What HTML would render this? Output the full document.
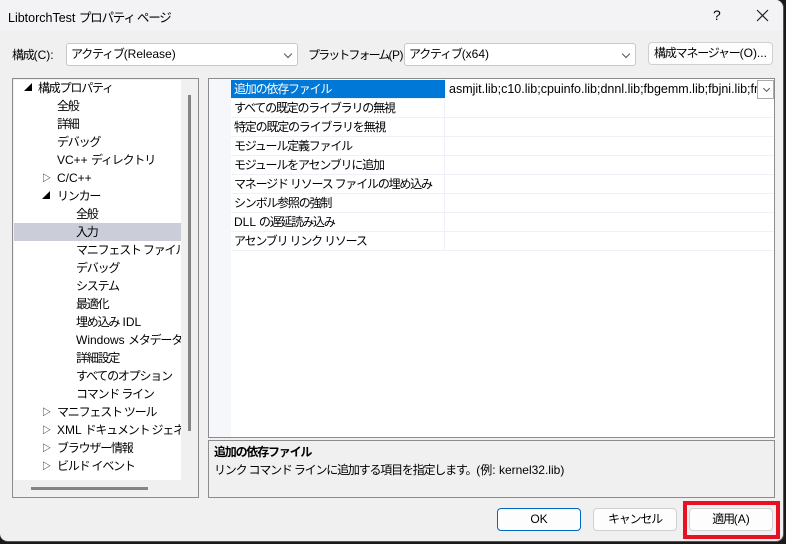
<!DOCTYPE html>
<html><head><meta charset="utf-8"><style>
*{box-sizing:border-box;margin:0;padding:0}
body{width:786px;height:544px;background:#1a1a1a;overflow:hidden;font-family:"Liberation Sans","Noto Sans CJK JP",sans-serif;font-size:12px;color:#000;letter-spacing:-1.2px}
.L{letter-spacing:0}
.win{position:absolute;left:0;top:0;width:784px;height:542px;background:#f0f0f0;border-radius:0 8px 8px 8px;overflow:hidden;border-right:1px solid #555;border-bottom:1px solid #555}
.a{position:absolute;white-space:nowrap}
.title{left:0;top:0;width:784px;height:31px;background:#f3f2f4}
.combo{background:#fff;border:1px solid #c8c8c8;border-radius:3px;height:23px;line-height:21px;padding-left:4px}
.chev{position:absolute;right:6px;top:7px;width:6px;height:6px;border-right:1px solid #555;border-bottom:1px solid #555;transform:rotate(45deg)}
.btn{background:#fdfdfd;border:1px solid #d0d0d0;border-radius:4px;text-align:center;height:23px;line-height:21px}
.tree{left:12px;top:78px;width:187px;height:420px;border:1px solid #8c8c8c;background:#f0f0f0}
.ti{position:absolute;height:18px;line-height:18px;white-space:nowrap}
.grid{left:208px;top:78px;width:567px;height:360px;border:1px solid #8c8c8c;background:#fff}
.row{position:absolute;left:22px;width:543px;height:19px;line-height:18px;border-bottom:1px solid #eef1f7;padding-left:3px}
</style></head><body>
<div class="win">
<div class="a title"></div>
<div class="a" style="left:8px;top:7px;font-size:12.5px"><span class="L">LibtorchTest </span>プロパティ ページ</div>
<div class="a" style="left:713px;top:7px;font-size:14px">?</div>
<svg class="a" style="left:756px;top:9px" width="13" height="13"><path d="M1 1L12 12M12 1L1 12" stroke="#222" stroke-width="1.2"/></svg>

<div class="a" style="left:12px;top:46px">構成<span class="L">(C):</span></div>
<div class="a combo" style="left:66px;top:43px;width:232px">アクティブ<span class="L">(Release)</span><span class="chev"></span></div>
<div class="a" style="left:308px;top:46px;letter-spacing:-1.9px">プラットフォーム<span style="letter-spacing:-0.5px">(P):</span></div>
<div class="a combo" style="left:404px;top:43px;width:232px">アクティブ<span class="L">(x64)</span><span class="chev"></span></div>
<div class="a btn" style="left:648px;top:42px;width:125px">構成マネージャー<span class="L">(O)...</span></div>

<div class="a tree">
 <div style="position:absolute;left:1px;top:1px;width:167px;height:400px;background:#fff;overflow:hidden">
 <div style="position:absolute;left:0;top:143px;width:167px;height:18px;background:#cbcdd9"></div>
 <div class="ti" style="left:10px;top:-1px;font-size:8px">◢</div><div class="ti" style="left:24px;top:-1px">構成プロパティ</div>
 <div class="ti" style="left:43px;top:17px">全般</div>
 <div class="ti" style="left:43px;top:35px">詳細</div>
 <div class="ti" style="left:43px;top:53px">デバッグ</div>
 <div class="ti" style="left:43px;top:71px"><span class="L">VC++ </span>ディレクトリ</div>
 <div class="ti" style="left:28px;top:89px;font-size:9px">▷</div><div class="ti L" style="left:43px;top:89px">C/C++</div>
 <div class="ti" style="left:28px;top:107px;font-size:8px">◢</div><div class="ti" style="left:43px;top:107px">リンカー</div>
 <div class="ti" style="left:62px;top:125px">全般</div>
 <div class="ti" style="left:62px;top:143px">入力</div>
 <div class="ti" style="left:62px;top:161px">マニフェスト ファイル</div>
 <div class="ti" style="left:62px;top:179px">デバッグ</div>
 <div class="ti" style="left:62px;top:197px">システム</div>
 <div class="ti" style="left:62px;top:215px">最適化</div>
 <div class="ti" style="left:62px;top:233px">埋め込み<span class="L"> IDL</span></div>
 <div class="ti" style="left:62px;top:251px"><span class="L">Windows </span>メタデータ</div>
 <div class="ti" style="left:62px;top:269px">詳細設定</div>
 <div class="ti" style="left:62px;top:287px">すべてのオプション</div>
 <div class="ti" style="left:62px;top:305px">コマンド ライン</div>
 <div class="ti" style="left:28px;top:323px;font-size:9px">▷</div><div class="ti" style="left:43px;top:323px">マニフェスト ツール</div>
 <div class="ti" style="left:28px;top:341px;font-size:9px">▷</div><div class="ti" style="left:43px;top:341px"><span class="L">XML </span>ドキュメント ジェネレーター</div>
 <div class="ti" style="left:28px;top:359px;font-size:9px">▷</div><div class="ti" style="left:43px;top:359px">ブラウザー情報</div>
 <div class="ti" style="left:28px;top:377px;font-size:9px">▷</div><div class="ti" style="left:43px;top:377px">ビルド イベント</div>
 </div>
 <div style="position:absolute;left:175px;top:16px;width:3px;height:336px;background:#858585"></div>
 <div style="position:absolute;left:18px;top:408px;width:117px;height:3px;background:#858585"></div>
</div>

<div class="a grid">
 <div style="position:absolute;left:0;top:0;width:22px;height:358px;background:#f5f7fb"></div>
 <div style="position:absolute;left:235px;top:0;width:1px;height:171px;background:#eef1f7"></div>
 <div class="row" style="top:1px;width:214px;background:#0078d7;color:#fff">追加の依存ファイル</div>
 <div class="L" style="position:absolute;left:240px;top:1px;width:308px;height:19px;line-height:18px;overflow:hidden;white-space:nowrap;font-size:12.5px">asmjit.lib;c10.lib;cpuinfo.lib;dnnl.lib;fbgemm.lib;fbjni.lib;fmt.lib</div>
 <div style="position:absolute;left:548px;top:1px;width:17px;height:19px;border:1px solid #aaa;background:#fff"><span class="chev" style="right:4px;top:5px;width:5px;height:5px"></span></div>
 <div class="row" style="top:20px">すべての既定のライブラリの無視</div>
 <div class="row" style="top:39px">特定の既定のライブラリを無視</div>
 <div class="row" style="top:58px">モジュール定義ファイル</div>
 <div class="row" style="top:77px">モジュールをアセンブリに追加</div>
 <div class="row" style="top:96px">マネージド リソース ファイルの埋め込み</div>
 <div class="row" style="top:115px">シンボル参照の強制</div>
 <div class="row" style="top:134px"><span class="L">DLL </span>の遅延読み込み</div>
 <div class="row" style="top:153px">アセンブリ リンク リソース</div>
</div>

<div class="a" style="left:208px;top:440px;width:567px;height:58px;border:1px solid #8c8c8c"></div>
<div class="a" style="left:214px;top:443px;font-weight:bold">追加の依存ファイル</div>
<div class="a" style="left:214px;top:461px">リンク コマンド ラインに追加する項目を指定します。<span class="L">(例: kernel32.lib)</span></div>

<div class="a btn L" style="left:497px;top:508px;width:84px;border-color:#0067c0">OK</div>
<div class="a btn" style="left:593px;top:508px;width:84px">キャンセル</div>
<div class="a btn" style="left:689px;top:508px;width:84px">適用<span class="L">(A)</span></div>
<div class="a" style="left:683px;top:501px;width:97px;height:38px;border:4px solid #e81123"></div>
</div>
</body></html>
